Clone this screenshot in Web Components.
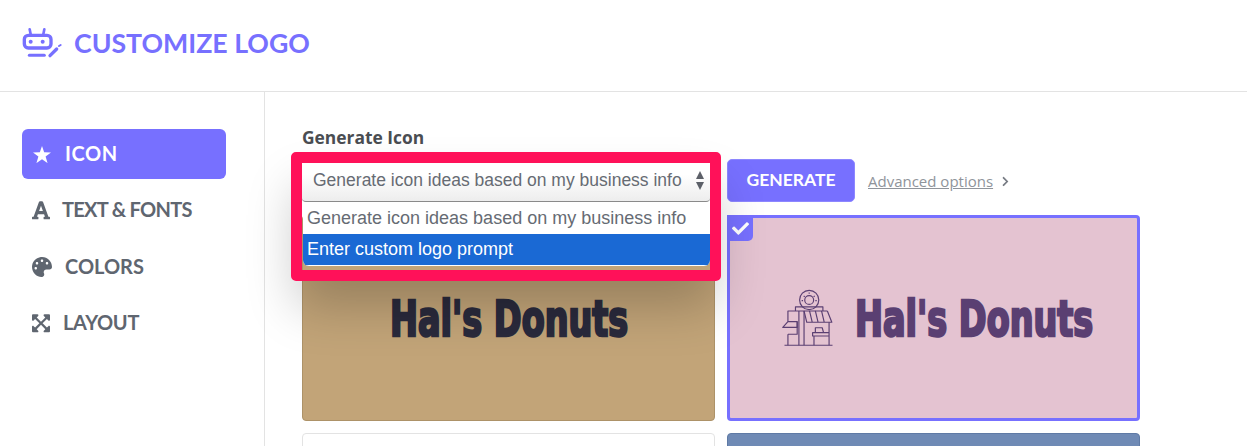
<!DOCTYPE html>
<html>
<head>
<meta charset="utf-8">
<title>Customize Logo</title>
<style>
  html, body { margin: 0; height: 446px; overflow: hidden; background: #fff; }
  body { font-family: "Lato", sans-serif; }
</style>
</head>
<body>
<customize-page>
  <page-header slot="header">CUSTOMIZE LOGO</page-header>
  <side-nav slot="nav">
    <nav-item icon="star" active>ICON</nav-item>
    <nav-item icon="font">TEXT &amp; FONTS</nav-item>
    <nav-item icon="palette">COLORS</nav-item>
    <nav-item icon="layout">LAYOUT</nav-item>
  </side-nav>
  <icon-panel slot="main">
    <prompt-select slot="select"></prompt-select>
    <logo-card style="--bg:#c2a478;--fg:#2a2a3c;--edge:#ad9268">Hal's Donuts</logo-card>
    <logo-card selected shop style="--bg:#e4c3d1;--fg:#5a3f72;--edge:#7770ff">Hal's Donuts</logo-card>
    <logo-card style="--bg:#fff;--edge:#e3e3e3"></logo-card>
    <logo-card style="--bg:#6f8ab5;--edge:#5f7aa5"></logo-card>
  </icon-panel>
</customize-page>

<script>
const ICONS = {
  star: ["0 0 100 95", "M50 0 62 35 100 36 70 59 81 95 50 74 19 95 30 59 0 36 38 35Z"],
  font: ["0 0 448 512", "M432 416h-23.41L277.88 53.69A32 32 0 0 0 247.58 32h-47.16a32 32 0 0 0-30.3 21.69L39.41 416H16a16 16 0 0 0-16 16v32a16 16 0 0 0 16 16h128a16 16 0 0 0 16-16v-32a16 16 0 0 0-16-16h-19.58l23.3-64h152.56l23.3 64H304a16 16 0 0 0-16 16v32a16 16 0 0 0 16 16h128a16 16 0 0 0 16-16v-32a16 16 0 0 0-16-16zM176.85 272L224 142.51 271.15 272z"],
  palette: ["0 0 512 512", "M204.3 5C104.9 24.4 24.8 104.3 5.2 203.4c-37 187 131.7 326.4 258.8 306.7 41.2-6.4 61.4-54.6 42.5-91.7-23.1-45.4 9.9-98.4 60.9-98.4h79.7c35.8 0 64.8-29.6 64.9-65.3C511.5 97.1 368.1-26.9 204.3 5zM96 320c-17.7 0-32-14.3-32-32s14.3-32 32-32 32 14.3 32 32-14.3 32-32 32zm32-128c-17.7 0-32-14.3-32-32s14.3-32 32-32 32 14.3 32 32-14.3 32-32 32zm128-64c-17.7 0-32-14.3-32-32s14.3-32 32-32 32 14.3 32 32-14.3 32-32 32zm128 64c-17.7 0-32-14.3-32-32s14.3-32 32-32 32 14.3 32 32-14.3 32-32 32z"],
  layout: ["0 0 448 512", "M448 344v112a23.94 23.94 0 0 1-24 24H312c-21.39 0-32.09-25.9-17-41l36.2-36.2L224 295.6 116.77 402.9 153 439c15.09 15.1 4.39 41-17 41H24a23.94 23.94 0 0 1-24-24V344c0-21.4 25.89-32.1 41-17l36.2 36.2L184.46 256 77.18 148.7 41 185c-15.1 15.1-41 4.4-41-17V56a23.94 23.94 0 0 1 24-24h112c21.39 0 32.09 25.9 17 41l-36.2 36.2L224 216.4l107.23-107.3L295 73c-15.09-15.1-4.39-41 17-41h112a23.94 23.94 0 0 1 24 24v112c0 21.4-25.89 32.1-41 17l-36.2-36.2L263.54 256l107.28 107.3L407 327.1c15.1-15.2 41-4.5 41 16.9z"],
  check: ["0 0 512 512", "M173.898 439.404l-166.4-166.4c-9.997-9.997-9.997-26.206 0-36.204l36.203-36.204c9.997-9.998 26.207-9.998 36.204 0L192 312.69 432.095 72.596c9.997-9.997 26.207-9.997 36.204 0l36.203 36.204c9.997 9.997 9.997 26.206 0 36.204l-294.4 294.401c-9.998 9.999-26.207 9.999-36.204-.001z"],
  chevron: ["0 0 320 512", "M285.476 272.971L91.132 467.314c-9.373 9.373-24.569 9.373-33.941 0l-22.667-22.667c-9.357-9.357-9.375-24.522-.04-33.901L188.505 256 34.484 101.255c-9.335-9.379-9.317-24.544.04-33.901l22.667-22.667c9.373-9.373 24.569-9.373 33.941 0L285.475 239.03c9.373 9.372 9.373 24.568.001 33.941z"]
};

function faIcon(name) {
  const [box, d] = ICONS[name];
  return `<svg viewBox="${box}" fill="currentColor"><path d="${d}"/></svg>`;
}

class CustomizePage extends HTMLElement {
  constructor() {
    super();
    this.attachShadow({ mode: "open" });
    this.shadowRoot.innerHTML = `
      <style>
        :host { display: block; }
        .body { display: flex; }
        .nav { flex: 0 0 264px; height: 354px; border-right: 1px solid #e3e3e3; }
      </style>
      <slot name="header"></slot>
      <div class="body">
        <div class="nav"><slot name="nav"></slot></div>
        <slot name="main"></slot>
      </div>`;
  }
}

class PageHeader extends HTMLElement {
  constructor() {
    super();
    this.attachShadow({ mode: "open" });
    this.shadowRoot.innerHTML = `
      <style>
        :host {
          display: flex; align-items: center; gap: 11px;
          height: 86px; padding: 0 0 5px 22px;
          border-bottom: 1px solid #e3e3e3;
          color: #7770ff;
          font: 700 26.7px "Lato", sans-serif;
        }
        svg { width: 41px; height: 32px; flex: none; }
      </style>
      <svg viewBox="66 80 123 96" fill="none" stroke="currentColor" stroke-linecap="round" stroke-linejoin="round">
        <rect x="73" y="105" width="80" height="38" rx="12" stroke-width="10"/>
        <path d="M92 102 89 87M130 102 133 87" stroke-width="8"/>
        <circle cx="92" cy="124" r="6" fill="currentColor" stroke="none"/>
        <circle cx="128" cy="124" r="6" fill="currentColor" stroke="none"/>
        <path d="M88 165H133" stroke-width="9"/>
        <path d="M150 166 170 146" stroke-width="10"/>
        <path d="M177 137 182 134" stroke-width="6"/>
      </svg>
      <span><slot></slot></span>`;
  }
}

class SideNav extends HTMLElement {
  constructor() {
    super();
    this.attachShadow({ mode: "open" });
    this.shadowRoot.innerHTML = `
      <style>
        :host {
          display: flex; flex-direction: column; gap: 6.5px;
          padding: 37px 38px 0 22px;
        }
      </style>
      <slot></slot>`;
  }
}

class NavItem extends HTMLElement {
  constructor() {
    super();
    this.attachShadow({ mode: "open" });
    const name = this.getAttribute("icon");
    this.shadowRoot.innerHTML = `
      <style>
        :host {
          display: flex; align-items: center;
          height: 50px; padding-left: 10px; border-radius: 6px;
          color: #5f6670;
          font: 700 20px "Lato", sans-serif;
        }
        :host([active]) { background: #7770ff; color: #fff; }
        svg { display: block; width: 18px; }
        .ico { margin-right: 13px; }
        .t { margin-top: -3px; }
        :host([icon="star"]) .ico { margin: 1px 14px 0 1px; }
        :host([icon="star"]) .t { letter-spacing: .6px; }
        :host([icon="font"]) .ico { margin-right: 12px; }
        :host([icon="font"]) .t { letter-spacing: -.7px; }
        :host([icon="palette"]) svg { width: 20px; }
        :host([icon="layout"]) .t { letter-spacing: -.3px; }
      </style>
      <span class="ico">${faIcon(name)}</span>
      <span class="t"><slot></slot></span>`;
  }
}

class IconPanel extends HTMLElement {
  constructor() {
    super();
    this.attachShadow({ mode: "open" });
    this.shadowRoot.innerHTML = `
      <style>
        :host { display: block; padding: 35px 0 0 37px; }
        h2 {
          margin: 0 0 12px; height: 20px;
          font: 700 17.4px/20px "Open Sans", sans-serif; color: #4a4d52;
        }
        .row { display: flex; align-items: flex-start; margin-bottom: 13px; height: 43px; }
        .gen {
          width: 128px; height: 43px; margin-left: 17px; box-sizing: border-box;
          border: 1px solid #8d87ff; border-radius: 5px;
          background: #7770ff; color: #fff;
          font: 700 17.5px/39px "Lato", sans-serif; text-align: center;
        }
        .adv {
          margin: 13px 0 0 13px; display: flex; align-items: center; gap: 9px;
          color: #8f949b; font: 15px/18px "Open Sans", sans-serif;
        }
        .adv span { text-decoration: underline; }
        .adv svg { height: 11px; display: block; color: #777c84; }
        .grid { display: grid; grid-template-columns: 413px 413px; grid-auto-rows: 206px; gap: 12px; }
      </style>
      <h2>Generate Icon</h2>
      <div class="row">
        <slot name="select"></slot>
        <div class="gen">GENERATE</div>
        <div class="adv"><span>Advanced options</span>${faIcon("chevron")}</div>
      </div>
      <div class="grid"><slot></slot></div>`;
  }
}

class PromptSelect extends HTMLElement {
  constructor() {
    super();
    this.attachShadow({ mode: "open" });
    this.shadowRoot.innerHTML = `
      <style>
        :host {
          display: block; position: relative; z-index: 5;
          width: 408px; height: 39px; margin-top: 4px;
          font: 18px "Liberation Sans", sans-serif; color: #666b73;
        }
        .frame {
          position: absolute; left: -11px; top: -11px;
          width: 408px; height: 107px;
          border: 11px solid #ff1159; border-radius: 5px;
          box-shadow: 0 30px 50px -5px rgba(0,0,0,.22);
          pointer-events: none;
        }
        .box {
          height: 39px; box-sizing: border-box; padding: 0 0 3px 11px;
          display: flex; align-items: center; justify-content: space-between;
          background: linear-gradient(#fff 30%, #ededed);
          border-bottom: 1px solid #8a8a8a;
          border-radius: 0 0 4px 4px;
          font-size: 17.5px;
        }
        .arrows { width: 8px; margin: 0 6px 0 0; display: block; fill: #5c6068; }
        .list {
          position: absolute; left: 1px; right: 0; top: 40px; height: 63px;
          background: #fff; border-radius: 6px; overflow: hidden;
        }
        .opt { height: 31px; line-height: 30px; padding-left: 4px; }
        .opt.on { background: #1a69d4; color: #fff; border-bottom: 1px solid #fff; }
      </style>
      <div class="box">
        <span>Generate icon ideas based on my business info</span>
        <svg class="arrows" viewBox="0 0 8 19"><path d="M4 0 8 8H0zM4 19 0 11h8z"/></svg>
      </div>
      <div class="list">
        <div class="opt">Generate icon ideas based on my business info</div>
        <div class="opt on">Enter custom logo prompt</div>
      </div>
      <div class="frame"></div>`;
  }
}

class LogoCard extends HTMLElement {
  constructor() {
    super();
    this.attachShadow({ mode: "open" });
    const shop = this.hasAttribute("shop") ? `
      <svg class="shop" viewBox="30 25 160 175" fill="none" stroke="currentColor" stroke-width="3.4" stroke-linejoin="round">
        <circle cx="112" cy="60" r="28"/><circle cx="112" cy="60" r="13"/>
        <path d="M96 48l3 3M112 38v4M128 48l-3 3M90 62h4M130 62h4"/>
        <path d="M72 92V80H152V92"/>
        <path d="M50 123V92H165M82 92V192M97 92V192M50 160H77V123M50 160V192"/>
        <path d="M97 92 105 125H178L165 92M113 92 121 125M130 92 138 125M148 92 156 125"/>
        <path d="M35 140 50 123H77V140ZM170 125V192M122 155H170V165H122ZM126 165V192M130 155V141H150L154 155"/>
        <path d="M40 192H180"/>
      </svg>` : "";
    const tick = this.hasAttribute("selected") ? `<span class="tick">${faIcon("check")}</span>` : "";
    this.shadowRoot.innerHTML = `
      <style>
        :host {
          display: flex; position: relative; align-items: center; justify-content: center; gap: 19px;
          box-sizing: border-box; border: 1px solid var(--edge); border-radius: 4px;
          background: var(--bg); color: var(--fg);
        }
        :host([selected]) { border-width: 3px; padding-left: 6px; }
        .name {
          display: block; width: 237px; white-space: nowrap;
          font: 700 40px "DejaVu Sans Condensed", "DejaVu Sans", sans-serif;
          -webkit-text-stroke: 2px currentColor; paint-order: stroke fill;
          transform: scale(.93, 1.26); transform-origin: left center;
        }
        .shop { width: 55px; height: 60px; flex: none; }
        .tick {
          position: absolute; left: -3px; top: -3px; width: 26px; height: 26px;
          background: #7770ff; color: #fff; border-radius: 0 0 5px 0;
          display: flex; align-items: center; justify-content: center;
        }
        .tick svg { width: 17px; display: block; }
      </style>
      ${tick}${shop}<span class="name"><slot></slot></span>`;
  }
}

customElements.define("customize-page", CustomizePage);
customElements.define("page-header", PageHeader);
customElements.define("side-nav", SideNav);
customElements.define("nav-item", NavItem);
customElements.define("icon-panel", IconPanel);
customElements.define("prompt-select", PromptSelect);
customElements.define("logo-card", LogoCard);
</script>
</body>
</html>
